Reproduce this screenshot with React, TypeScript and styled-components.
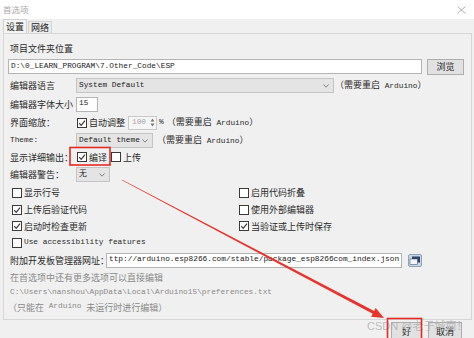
import React from 'react';
import styled, { createGlobalStyle } from 'styled-components';

const CJK = `"Noto Sans CJK SC", sans-serif`;
const MONO = `"Liberation Mono", "Noto Sans CJK SC", monospace`;

const Global = createGlobalStyle`
  html, body { margin: 0; padding: 0; background: #f0f0f0; }
  body { font-family: ${CJK}; }
`;

const Window = styled.div`
  position: relative;
  width: 474px;
  height: 338px;
  overflow: hidden;
  background: #f0f0f0;
  color: #2a2a2a;
  font-family: ${CJK};
  font-size: 9px;
  line-height: 1;
`;

const TitleBar = styled.div`
  height: 19px;
  background: #fff;
  display: flex;
  align-items: center;
  justify-content: space-between;
  padding: 0 8px 0 3px;
  color: #a8a8a8;
  font-size: 8.5px;
`;

const TabStrip = styled.div`
  height: 14px;
  display: flex;
  align-items: flex-end;
  padding-left: 3px;
`;

const Tab = styled.div<{ $active?: boolean }>`
  height: ${p => (p.$active ? 14 : 12)}px;
  width: 24px;
  box-sizing: border-box;
  display: flex;
  align-items: center;
  justify-content: center;
  border: 1px solid #d2d2d2;
  border-bottom: none;
  margin-left: ${p => (p.$active ? 0 : 1)}px;
  background: ${p => (p.$active ? '#f4f4f4' : '#ececec')};
  color: #222;
`;

const Panel = styled.div`
  margin: 0 2px 0 3px;
  height: 287px;
  box-sizing: border-box;
  border: 1px solid #d6d6d6;
  padding: 6px 7px 0 4px;
`;

const Row = styled.div<{ $h: number }>`
  height: ${p => p.$h}px;
  display: flex;
  align-items: center;
  white-space: nowrap;
`;

const Label = styled.span<{ $mono?: boolean; $w?: number }>`
  width: ${p => p.$w ?? 68}px;
  flex: none;
  padding-left: 2px;
  box-sizing: border-box;
  font-family: ${p => (p.$mono ? MONO : CJK)};
  font-size: ${p => (p.$mono ? '7.8px' : '9px')};
`;

const Field = styled.div<{ $w?: number }>`
  ${p => (p.$w ? `width: ${p.$w}px; flex: none;` : 'flex: 1;')}
  height: 15px;
  box-sizing: border-box;
  background: #fff;
  border: 1px solid #b4b4b4;
  display: flex;
  align-items: center;
  padding-left: 2px;
  overflow: hidden;
  font-family: ${MONO};
  font-size: 7.8px;
  color: #222;
`;

const Select = styled.div<{ $w: number }>`
  width: ${p => p.$w}px;
  flex: none;
  height: 15px;
  box-sizing: border-box;
  background: #e4e4e4;
  border: 1px solid #c4c4c4;
  display: flex;
  align-items: center;
  justify-content: space-between;
  padding: 0 4px 0 2px;
  font-family: ${MONO};
  font-size: 7.8px;
  color: #222;
`;

const Button = styled.div<{ $w: number; $h?: number }>`
  width: ${p => p.$w}px;
  height: ${p => p.$h ?? 16}px;
  flex: none;
  box-sizing: border-box;
  background: #e1e1e1;
  border: 1px solid #adadad;
  display: flex;
  align-items: center;
  justify-content: center;
  color: #222;
`;

const Note = styled.span<{ $ml: number }>`
  margin-left: ${p => p.$ml}px;
  font-family: ${CJK};
  font-size: 9px;
`;

const Mono = styled.span`
  font-family: ${MONO};
  font-size: 7.8px;
  white-space: pre;
`;

const Box = styled.span`
  width: 10px;
  height: 10px;
  flex: none;
  box-sizing: border-box;
  border: 1px solid #3a3a3a;
  background: #fff;
  display: inline-flex;
  align-items: center;
  justify-content: center;
`;

const CheckItem = styled.span<{ $mono?: boolean; $ml?: number }>`
  display: inline-flex;
  align-items: center;
  gap: 2px;
  margin-left: ${p => p.$ml ?? 0}px;
  font-family: ${p => (p.$mono ? MONO : CJK)};
  font-size: ${p => (p.$mono ? '7.8px' : '9px')};
`;

const Spin = styled.div`
  width: 29px;
  height: 14px;
  margin-left: 3px;
  box-sizing: border-box;
  background: #f6f6f6;
  border: 1px solid #c9c9c9;
  display: flex;
  align-items: center;
  justify-content: space-between;
  padding: 0 1px 0 3px;
  font-family: ${MONO};
  font-size: 7.8px;
  color: #a4a4a4;
`;

const CheckGrid = styled.div`
  display: grid;
  grid-template-columns: 227px 1fr;
  grid-template-rows: 17px 17px 16px 17px;
  grid-auto-flow: column;
  align-items: center;
  padding-left: 4px;
`;

const Info = styled.div<{ $mono?: boolean; $h: number; $indent?: number }>`
  height: ${p => p.$h}px;
  display: flex;
  align-items: center;
  padding-left: ${p => p.$indent ?? 2}px;
  color: #8a8a8a;
  white-space: nowrap;
  font-family: ${p => (p.$mono ? MONO : CJK)};
  font-size: ${p => (p.$mono ? '7.8px' : '9px')};
`;

const Footer = styled.div`
  height: 18px;
  display: flex;
  justify-content: flex-end;
  align-items: flex-start;
  gap: 6px;
  padding: 2px 12px 0 0;
`;

const Overlay = styled.svg`
  position: absolute;
  left: 0;
  top: 0;
  pointer-events: none;
`;

const Watermark = styled.div`
  position: absolute;
  left: 367px;
  top: 321px;
  font-family: "Liberation Sans", "Noto Sans CJK SC", sans-serif;
  font-size: 11px;
  color: rgba(170, 170, 170, 0.75);
  white-space: nowrap;
  pointer-events: none;
`;

const Chevron = () => (
  <svg width="6" height="4" viewBox="0 0 6 4">
    <polyline points="0.5,0.5 3,3.2 5.5,0.5" fill="none" stroke="#777" strokeWidth="0.9" />
  </svg>
);

function Check({ on, children, mono, ml }: { on?: boolean; children: React.ReactNode; mono?: boolean; ml?: number }) {
  return (
    <CheckItem $mono={mono} $ml={ml}>
      <Box>
        {on && (
          <svg width="8" height="8" viewBox="0 0 8 8">
            <polyline points="1.2,4.2 3.2,6.3 7,1.6" fill="none" stroke="#333" strokeWidth="1.1" />
          </svg>
        )}
      </Box>
      {children}
    </CheckItem>
  );
}

const Restart = ({ ml }: { ml: number }) => (
  <Note $ml={ml}>（需要重启<Mono> Arduino</Mono>）</Note>
);

export default function App() {
  return (
    <Window>
      <Global />
      <TitleBar>
        <span>首选项</span>
        <svg width="9" height="8" viewBox="0 0 9 8">
          <path d="M0.5 0.5 L8.5 7.5 M8.5 0.5 L0.5 7.5" stroke="#9a9a9a" strokeWidth="0.8" />
        </svg>
      </TitleBar>
      <TabStrip>
        <Tab $active>设置</Tab>
        <Tab>网络</Tab>
      </TabStrip>
      <Panel>
        <Row $h={17}><Label $w={120}>项目文件夹位置</Label></Row>
        <Row $h={19}>
          <Field>D:\0_LEARN_PROGRAM\7.Other_Code\ESP</Field>
          <Button $w={37} style={{ marginLeft: 5 }}>浏览</Button>
        </Row>
        <Row $h={19}>
          <Label>编辑器语言</Label>
          <Select $w={258}>System Default<Chevron /></Select>
          <Restart ml={1} />
        </Row>
        <Row $h={18}>
          <Label>编辑器字体大小</Label>
          <Field $w={22}>15</Field>
        </Row>
        <Row $h={19}>
          <Label>界面缩放：</Label>
          <Check on ml={1}>自动调整</Check>
          <Spin>
            100
            <svg width="5" height="9" viewBox="0 0 5 9">
              <path d="M2.5 0.5 L4.5 3.5 L0.5 3.5 Z M2.5 8.5 L4.5 5.5 L0.5 5.5 Z" fill="#777" />
            </svg>
          </Spin>
          <Mono style={{ marginLeft: 2 }}>%</Mono>
          <Restart ml={3} />
        </Row>
        <Row $h={17}>
          <Label $mono>Theme:</Label>
          <Select $w={77}>Default theme<Chevron /></Select>
          <Restart ml={4} />
        </Row>
        <Row $h={16}>
          <Label>显示详细输出：</Label>
          <Check on ml={1}>编译</Check>
          <Check ml={4}>上传</Check>
        </Row>
        <Row $h={19}>
          <Label>编辑器警告：</Label>
          <Select $w={34}>无<Chevron /></Select>
        </Row>
        <CheckGrid>
          <Check>显示行号</Check>
          <Check on>上传后验证代码</Check>
          <Check on>启动时检查更新</Check>
          <Check mono>Use accessibility features</Check>
          <Check>启用代码折叠</Check>
          <Check>使用外部编辑器</Check>
          <Check on>当验证或上传时保存</Check>
        </CheckGrid>
        <Row $h={18}>
          <Label $w={98}>附加开发板管理器网址：</Label>
          <Field $w={296}>ttp://arduino.esp8266.com/stable/package_esp8266com_index.json</Field>
          <svg width="14" height="13" viewBox="0 0 14 13" style={{ marginLeft: 6 }}>
            <rect x="0.5" y="0.5" width="13" height="12" rx="1.5" fill="#c9d6e6" stroke="#8ea3bd" />
            <rect x="4" y="2.5" width="8" height="6" fill="#2f4262" />
            <rect x="2" y="5" width="7.5" height="5.5" fill="#f4f6fa" stroke="#4a5d7c" strokeWidth="0.6" />
          </svg>
        </Row>
        <Info $h={16}>在首选项中还有更多选项可以直接编辑</Info>
        <Info $h={15} $mono>C:\Users\nanshou\AppData\Local\Arduino15\preferences.txt</Info>
        <Info $h={14} $indent={-3}>（只能在<Mono> Arduino </Mono>未运行时进行编辑）</Info>
      </Panel>
      <Footer>
        <Button $w={31} $h={19}>好</Button>
        <Button $w={34} $h={19}>取消</Button>
      </Footer>
      <Watermark>CSDN @老子城南！</Watermark>
      <Overlay width="474" height="338" viewBox="0 0 474 338">
        <rect x="70" y="147.5" width="40" height="17.5" fill="none" stroke="#e52b22" strokeWidth="1.6" />
        <rect x="387.5" y="318.5" width="34" height="21" fill="none" stroke="#e52b22" strokeWidth="1.6" />
        <polygon points="121.9,180.3 122.1,179.7 374.1,311.1 375.7,308 384,318 371.1,316.8 372.7,313.7" fill="#e8332a" />
      </Overlay>
    </Window>
  );
}
